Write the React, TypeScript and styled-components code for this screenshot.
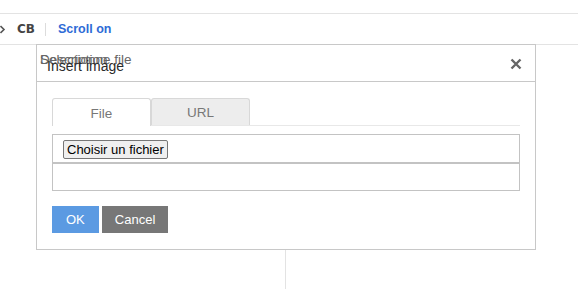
import React from "react";
import styled, { createGlobalStyle } from "styled-components";

const Global = createGlobalStyle`
  html, body { margin: 0; padding: 0; background: #fff; }
  body { font-family: "Liberation Sans", Arial, sans-serif; }
  #root { width: 578px; height: 289px; overflow: hidden; }
`;

const Page = styled.div`
  position: relative;
  width: 578px;
  height: 289px;
  overflow: hidden;
  display: flex;
  flex-direction: column;
`;

const TopStrip = styled.div`
  height: 13px;
  border-bottom: 1px solid #e3e3e3;
  flex: none;
`;

const Toolbar = styled.div`
  height: 30px;
  border-bottom: 1px solid #e3e3e3;
  display: flex;
  align-items: center;
  flex: none;
`;

const Chevron = styled.span`
  width: 17px;
  display: flex;
  align-items: center;
  margin-top: 1px;
`;

const ToolLabel = styled.span`
  font-family: "DejaVu Sans", sans-serif;
  font-weight: bold;
  font-size: 12px;
  color: #444;
`;

const Sep = styled.span`
  width: 1px;
  height: 13px;
  background: #dcdcdc;
  margin: 0 12px 0 10px;
`;

const ToolLink = styled.span`
  font-weight: bold;
  font-size: 12.5px;
  color: #2e6bd6;
`;

const Workspace = styled.div`
  flex: 1;
  display: grid;
  grid-template-columns: 286px 1fr;
`;

const Pane = styled.div<{ $divider?: boolean }>`
  border-right: ${(p) => (p.$divider ? "1px solid #e3e3e3" : "none")};
`;

const Dialog = styled.div`
  position: absolute;
  left: 36px;
  top: 44px;
  width: 500px;
  box-sizing: border-box;
  border: 1px solid #c8c8c8;
  background: #fff;
`;

const Header = styled.div`
  position: relative;
  height: 36px;
  border-bottom: 1px solid #c8c8c8;
  display: flex;
  align-items: center;
  justify-content: space-between;
  padding: 0 13px 0 10px;
`;

const GhostLabel = styled.span`
  position: absolute;
  left: 3px;
  top: 7px;
  font-size: 13.5px;
  color: #666;
  white-space: nowrap;
`;

const Title = styled.span`
  position: relative;
  top: 3px;
  font-size: 14px;
  color: #2a2a2a;
`;

const Close = styled.span`
  display: flex;
  align-items: center;
  position: relative;
  top: 1px;
`;

const Body = styled.div`
  padding: 16px 15px 16px 15px;
  display: flex;
  flex-direction: column;
`;

const Tabs = styled.div`
  display: flex;
  border-bottom: 1px solid #e8e8e8;
  height: 28px;
  box-sizing: border-box;
`;

const Tab = styled.div<{ $active?: boolean }>`
  width: 99px;
  box-sizing: border-box;
  border: 1px solid #d8d8d8;
  border-bottom: none;
  border-radius: 3px 3px 0 0;
  background: ${(p) => (p.$active ? "#fff" : "#ededed")};
  color: #777;
  font-size: 13.5px;
  display: flex;
  align-items: center;
  justify-content: center;
  padding-top: 1px;
  margin-bottom: ${(p) => (p.$active ? "-1px" : "0")};
`;

const FileBox = styled.div`
  margin-top: 8px;
  border: 1px solid #c3c3c3;
  display: flex;
  flex-direction: column;
`;

const FileRow = styled.div`
  height: 29px;
  display: flex;
  align-items: center;
  padding-left: 10px;
  border-bottom: 2px solid #c3c3c3;
  box-sizing: border-box;
`;

const EmptyRow = styled.div`
  height: 26px;
`;

const NativeButton = styled.button`
  font-family: "Liberation Sans", Arial, sans-serif;
  font-size: 13px;
  color: #000;
  background: #efefef;
  border: 1px solid #767676;
  border-radius: 2px;
  height: 19px;
  padding: 0 3px;
  line-height: 17px;
  margin-top: 1px;
`;

const Actions = styled.div`
  margin-top: 15px;
  display: flex;
  gap: 3px;
`;

const ActionButton = styled.button<{ $primary?: boolean }>`
  height: 27px;
  border: none;
  border-radius: 0;
  padding: 0 ${(p) => (p.$primary ? "14px" : "13px")};
  background: ${(p) => (p.$primary ? "#5b9ae2" : "#777777")};
  color: #fff;
  font-family: "Liberation Sans", Arial, sans-serif;
  font-size: 13px;
`;

export default function App() {
  return (
    <>
      <Global />
      <Page>
        <TopStrip />
        <Toolbar>
          <Chevron>
            <svg width="6" height="9" viewBox="0 0 6 9">
              <path d="M0.5 1 L4 4.5 L0.5 8" fill="none" stroke="#555" strokeWidth="1.6" />
            </svg>
          </Chevron>
          <ToolLabel>CB</ToolLabel>
          <Sep />
          <ToolLink>Scroll on</ToolLink>
        </Toolbar>
        <Workspace>
          <Pane $divider />
          <Pane />
        </Workspace>
        <Dialog>
          <Header>
            <GhostLabel>Selectionne file</GhostLabel>
            <GhostLabel>Description</GhostLabel>
            <Title>Insert image</Title>
            <Close>
              <svg width="12" height="12" viewBox="0 0 12 12">
                <path d="M1.5 1.5 L10.5 10.5 M10.5 1.5 L1.5 10.5" stroke="#666" strokeWidth="2.4" strokeLinecap="butt" />
              </svg>
            </Close>
          </Header>
          <Body>
            <Tabs>
              <Tab $active>File</Tab>
              <Tab>URL</Tab>
            </Tabs>
            <FileBox>
              <FileRow>
                <NativeButton type="button">Choisir un fichier</NativeButton>
              </FileRow>
              <EmptyRow />
            </FileBox>
            <Actions>
              <ActionButton $primary>OK</ActionButton>
              <ActionButton>Cancel</ActionButton>
            </Actions>
          </Body>
        </Dialog>
      </Page>
    </>
  );
}
